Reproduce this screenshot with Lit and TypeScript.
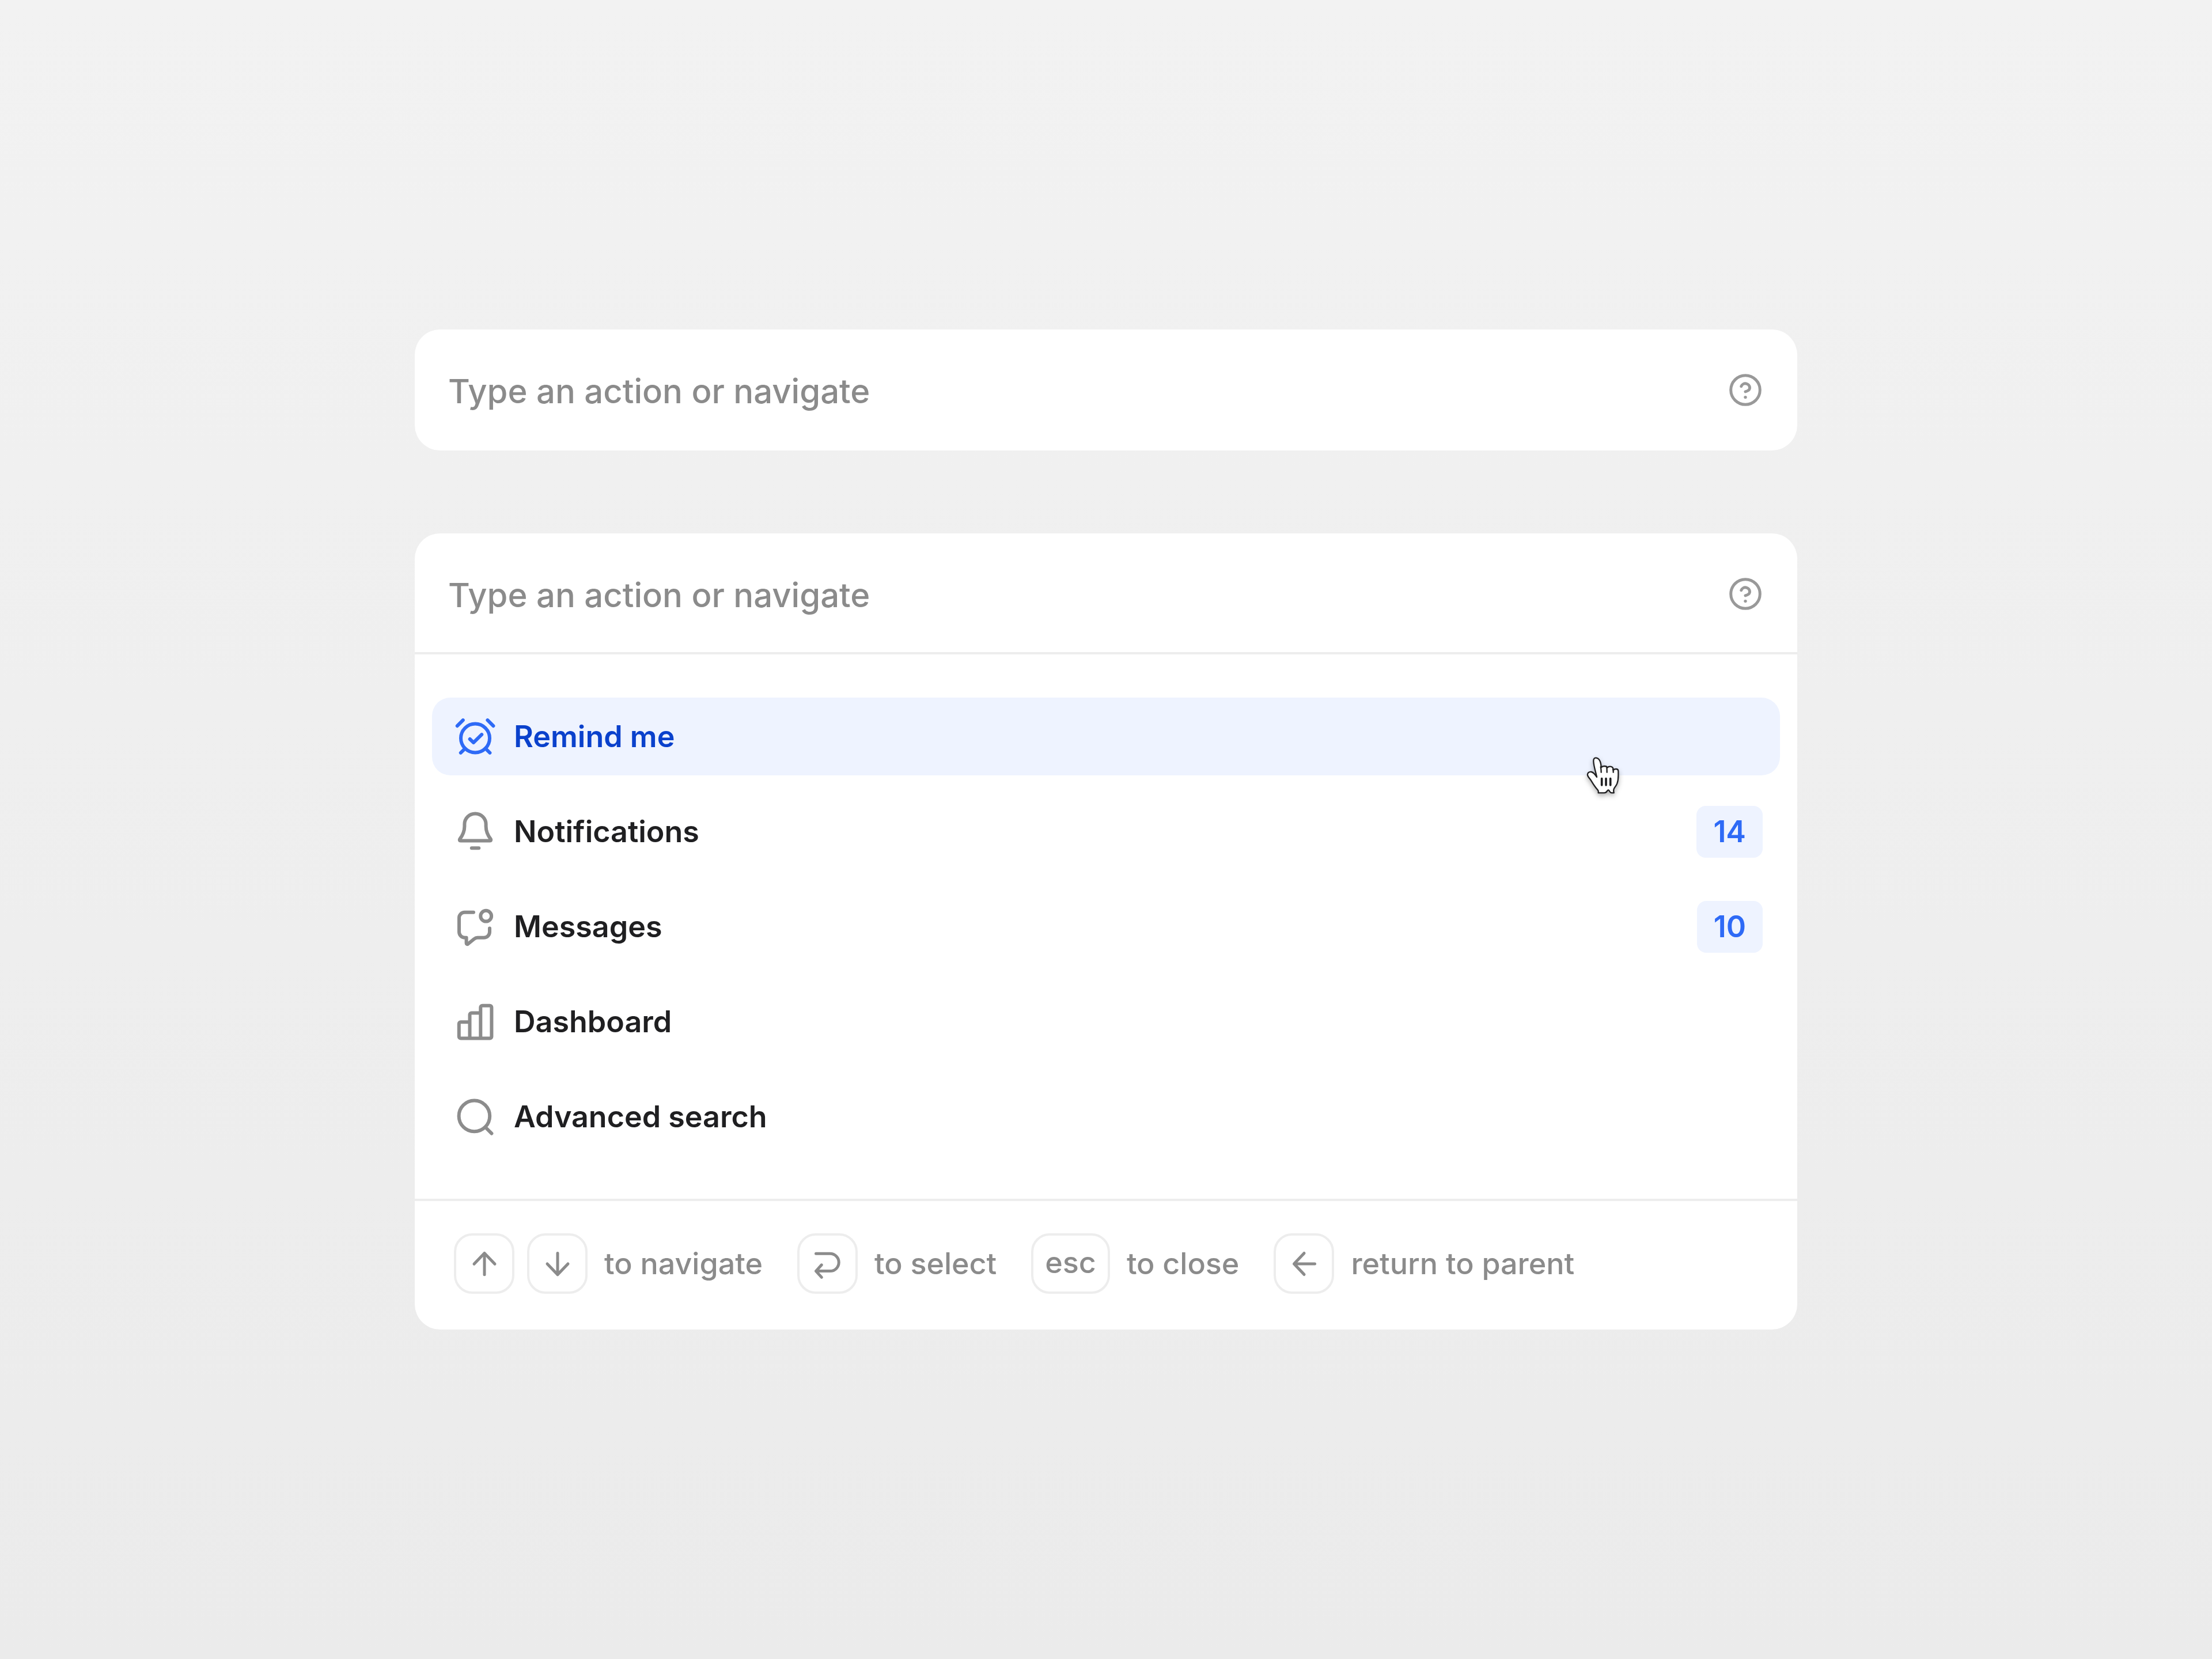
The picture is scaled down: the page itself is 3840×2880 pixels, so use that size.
import {LitElement, html, css, svg, nothing} from 'lit';
import type {SVGTemplateResult} from 'lit';
import {customElement, property} from 'lit/decorators.js';
import {classMap} from 'lit/directives/class-map.js';

interface Action {
  label: string;
  icon: SVGTemplateResult;
  count?: number;
  active?: boolean;
}

const icons = {
  alarm: svg`
    <circle cx="38" cy="40.5" r="25"/>
    <path d="M6.8 19.2 16.8 9.2M59.4 9.2l10 10M12.8 65.8l7.6-7.4M63.4 65.8l-7.6-7.4"/>
    <path d="M28.7 42 35 48.2l14.2-14"/>`,
  bell: svg`
    <path d="M38 6.6c-10.4 0-18.6 8.2-18.6 18.4v3.4c0 9.6-3.200 15.600-8.200 22.200-1.200 1.600-.400 3 1.400 3h50.800c1.800 0 2.600-1.400 1.400-3-5-6.600-8.200-12.600-8.200-22.200V25C56.600 14.800 48.400 6.600 38 6.600Z"/>
    <path d="M31.8 66.2h12.400"/>`,
  message: svg`
    <path d="M35 12.8H19.5a9.500 9.500 0 0 0-9.500 9.500v24.400a10 10 0 0 0 10 10h2.600v9.800c0 1.500 1.500 2.200 2.700 1.300l10.500-8.600c2-1.700 3.600-2.500 6.200-2.500H53a10 10 0 0 0 10-10V40.600"/>
    <circle cx="56.7" cy="19.2" r="9.4"/>`,
  chart: svg`
    <path d="M28.5 66.5v-41a3 3 0 0 1 3-3h15.800M28.500 38.200H12.800a3 3 0 0 0-3 3v22.300a3 3 0 0 0 3 3h50.600a3 3 0 0 0 3-3V12.800a3 3 0 0 0-3-3H50.300a3 3 0 0 0-3 3v53.700"/>`,
  search: svg`
    <circle cx="36.4" cy="36.4" r="26.8"/>
    <path d="m55.8 56 10.600 10.700"/>`,
  up: svg`<path d="M28 46.8V9.500M10 28.300 28 9.500l18 18.800"/>`,
  down: svg`<path d="M28 9.500v37.300M10 28l18 18.800L46 28"/>`,
  left: svg`<path d="M46.500 28H10.500M28 9.500 10.500 28 28 46.500"/>`,
  enter: svg`<path d="M8.500 10.200H33a15.200 15.200 0 0 1 0 30.400H8.500M18.300 29.800 8.500 40.600l9.800 10.800"/>`,
};

@customElement('search-bar')
export class SearchBar extends LitElement {
  @property() label = '';

  static styles = css`
    :host {
      display: flex;
      align-items: center;
      gap: 30px;
      box-sizing: border-box;
      height: 210px;
      padding: 0 60px 0 58px;
    }
    .field {
      flex: 1;
      min-width: 0;
      height: 90px;
      padding: 4px 0 0;
      border: 0;
      outline: 0;
      background: none;
      color: #1f1f21;
      font: 500 58px/86px Inter, "Liberation Sans", sans-serif;
    }
    .field::placeholder {
      color: #8b8b8b;
      opacity: 1;
    }
    .help {
      display: block;
      padding: 0;
      border: 0;
      background: none;
      color: #999;
      cursor: pointer;
    }
    .glyph {
      display: block;
      width: 60px;
      height: 60px;
      fill: none;
      stroke: currentColor;
      stroke-width: 5;
      stroke-linecap: round;
      stroke-linejoin: round;
    }
    .dot {
      fill: currentColor;
      stroke: none;
    }
  `;

  render() {
    return html`
      <input class="field" type="text" aria-label=${this.label} placeholder=${this.label}>
      <button class="help" type="button" aria-label="Help">
        <svg class="glyph" viewBox="0 0 60 60" aria-hidden="true">
          <circle cx="30" cy="30" r="25.3"/>
          <path d="M22.8 23.7a7.600 7.600 0 0 1 14.700 2.500c0 5-7.500 6.700-7.500 6.700"/>
          <circle class="dot" cx="30" cy="42.6" r="2.7"/>
        </svg>
      </button>
    `;
  }
}

@customElement('action-list')
export class ActionList extends LitElement {
  @property({attribute: false}) actions: Action[] = [];

  static styles = css`
    :host {
      display: block;
      padding: 75px 30px;
    }
    .list {
      display: grid;
      gap: 30px;
      margin: 0;
      padding: 0;
      list-style: none;
    }
    .item {
      position: relative;
    }
    .row {
      display: flex;
      align-items: center;
      gap: 29px;
      box-sizing: border-box;
      width: 100%;
      height: 135px;
      padding: 0 30px 0 37px;
      border: 0;
      border-radius: 32px;
      background: none;
      color: #1f1f21;
      font: 600 52px/64px Inter, "Liberation Sans", sans-serif;
      text-align: left;
      cursor: pointer;
    }
    .row.active {
      background: #eef3ff;
      color: #0a41cc;
    }
    .icon {
      flex: none;
      width: 76px;
      height: 76px;
      fill: none;
      stroke: #8c8c8c;
      stroke-width: 6;
      stroke-linecap: round;
      stroke-linejoin: round;
    }
    .active .icon {
      stroke: #2e6af6;
    }
    .label {
      flex: 1;
    }
    .count {
      padding: 13px 29px;
      border-radius: 16px;
      background: #eef3ff;
      color: #2e6af6;
    }
    .pointer {
      position: absolute;
      top: 99px;
      right: 270px;
      width: 70px;
      height: 80px;
      overflow: visible;
      fill: #fff;
      stroke: #1f1f21;
      stroke-width: 7;
      stroke-linecap: round;
      stroke-linejoin: round;
      filter: drop-shadow(0 4px 4px rgba(0, 0, 0, 0.3));
      pointer-events: none;
    }
    .pointer .creases {
      stroke-width: 11;
    }
  `;

  private renderPointer() {
    return html`
      <svg class="pointer" viewBox="0 0 210 240" aria-hidden="true">
        <path d="M62 17C53 16 48 24 49 36c1 16 5 32 9 48 3 11 6 22 8 33-8-13-16-24-28-27-12-3-22 7-20 17 2 9 12 18 19 29 9 15 20 33 34 48 3 3 4 7 3 15h31c8 0 11-3 14-8 3-4 4-7 7-7 3 0 4 3 7 8 3 5 6 7 11 7h11c-1-6-3-13 0-20 3-8 13-17 17-29 5-14 6-27 6-42V86c0-8-5-11-12-11-6 0-10 2-13 5-1-10-7-18-18-18-6 0-11 2-14 6-2-6-8-8-16-8-6 0-12 2-16 7C88 46 82 19 62 17Z"/>
        <path d="M86 64c2 9 3 18 3 28M118 66c1 9 1 17 1 26M150 76c2 6 2 11 2 16"/>
        <path class="creases" d="M92 125v34M114 125v34M137 125v34"/>
      </svg>
    `;
  }

  render() {
    return html`
      <ul class="list">
        ${this.actions.map((action) => html`
          <li class="item">
            <button type="button" class=${classMap({row: true, active: !!action.active})}>
              <svg class="icon" viewBox="0 0 76 76" aria-hidden="true">${action.icon}</svg>
              <span class="label">${action.label}</span>
              ${action.count ? html`<span class="count">${action.count}</span>` : nothing}
            </button>
            ${action.active ? this.renderPointer() : nothing}
          </li>
        `)}
      </ul>
    `;
  }
}

@customElement('key-hints')
export class KeyHints extends LitElement {
  static styles = css`
    :host {
      display: flex;
      flex-wrap: wrap;
      gap: 30px 60px;
      padding: 56px 68px 62px;
      color: #8b8b8b;
      font: 500 52px/64px Inter, "Liberation Sans", sans-serif;
    }
    .hint {
      display: flex;
      align-items: center;
      gap: 29px;
    }
    .keys {
      display: flex;
      gap: 22px;
    }
    .key {
      display: flex;
      align-items: center;
      justify-content: center;
      box-sizing: border-box;
      min-width: 105px;
      height: 105px;
      padding: 0 20px;
      border: 4px solid #ededed;
      border-radius: 32px;
      font: inherit;
    }
    .key.text {
      padding-bottom: 4px;
    }
    .glyph {
      width: 56px;
      height: 56px;
      fill: none;
      stroke: currentColor;
      stroke-width: 5;
      stroke-linecap: round;
      stroke-linejoin: round;
    }
  `;

  private renderKey(name: string, icon: SVGTemplateResult) {
    return html`
      <kbd class="key" aria-label=${name}>
        <svg class="glyph" viewBox="0 0 56 56" aria-hidden="true">${icon}</svg>
      </kbd>
    `;
  }

  render() {
    return html`
      <div class="hint">
        <div class="keys">
          ${this.renderKey('Up', icons.up)}
          ${this.renderKey('Down', icons.down)}
        </div>
        <span>to navigate</span>
      </div>
      <div class="hint">
        ${this.renderKey('Enter', icons.enter)}
        <span>to select</span>
      </div>
      <div class="hint">
        <kbd class="key text">esc</kbd>
        <span>to close</span>
      </div>
      <div class="hint">
        ${this.renderKey('Left', icons.left)}
        <span>return to parent</span>
      </div>
    `;
  }
}

@customElement('app-root')
export class AppRoot extends LitElement {
  private actions: Action[] = [
    {label: 'Remind me', icon: icons.alarm, active: true},
    {label: 'Notifications', icon: icons.bell, count: 14},
    {label: 'Messages', icon: icons.message, count: 10},
    {label: 'Dashboard', icon: icons.chart},
    {label: 'Advanced search', icon: icons.search},
  ];

  static styles = css`
    :host {
      display: flex;
      flex-direction: column;
      align-items: center;
      justify-content: center;
      gap: 144px;
      box-sizing: border-box;
      min-height: 100vh;
      padding: 60px;
      background: linear-gradient(#f2f2f2, #ebebeb);
    }
    .card {
      width: 100%;
      max-width: 2400px;
      border-radius: 44px;
      background: #fff;
    }
    .head {
      height: 206px;
      padding-top: 4px;
    }
    .results {
      border: solid #ededed;
      border-width: 4px 0;
    }
  `;

  render() {
    return html`
      <section class="card">
        <search-bar label="Type an action or navigate"></search-bar>
      </section>
      <section class="card">
        <search-bar class="head" label="Type an action or navigate"></search-bar>
        <action-list class="results" .actions=${this.actions}></action-list>
        <key-hints></key-hints>
      </section>
    `;
  }
}
